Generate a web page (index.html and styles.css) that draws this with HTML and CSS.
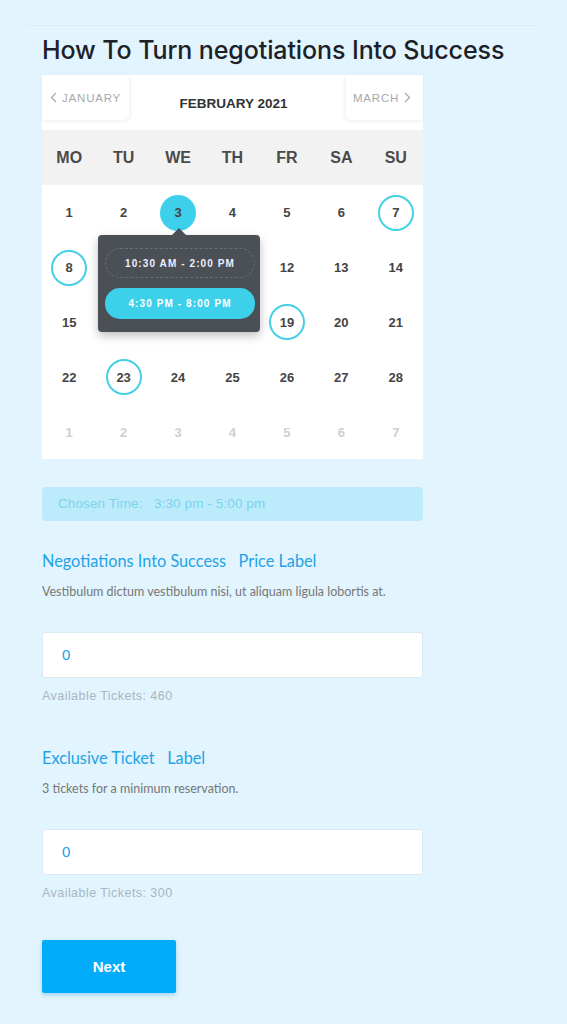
FILE: index.html
```html
<!DOCTYPE html>
<html>
<head>
<meta charset="utf-8">
<link rel="stylesheet" href="styles.css">
</head>
<body>
<div class="page">
  <div class="topline"></div>
  <h1 class="title">How To Turn negotiations Into Success</h1>
  <div class="form">
    <div class="calendar">
      <div class="cal-head">
        <div class="nav prev"><svg width="7" height="11" viewBox="0 0 7 11"><path d="M6 1 L1.5 5.5 L6 10" fill="none" stroke="#aaa" stroke-width="1.3"/></svg><span>JANUARY</span></div>
        <div class="month">FEBRUARY 2021</div>
        <div class="nav next"><span>MARCH</span><svg width="7" height="11" viewBox="0 0 7 11"><path d="M1 1 L5.5 5.5 L1 10" fill="none" stroke="#aaa" stroke-width="1.3"/></svg></div>
      </div>
      <div class="weekdays">
        <span>MO</span><span>TU</span><span>WE</span><span>TH</span><span>FR</span><span>SA</span><span>SU</span>
      </div>
      <div class="days">
        <div class="day"><span>1</span></div>
        <div class="day"><span>2</span></div>
        <div class="day"><span class="sel">3</span></div>
        <div class="day"><span>4</span></div>
        <div class="day"><span>5</span></div>
        <div class="day"><span>6</span></div>
        <div class="day"><span class="ring">7</span></div>
        <div class="day"><span class="ring">8</span></div>
        <div class="day covered"><span>9</span></div>
        <div class="day covered"><span>10</span></div>
        <div class="day covered"><span>11</span></div>
        <div class="day"><span>12</span></div>
        <div class="day"><span>13</span></div>
        <div class="day"><span>14</span></div>
        <div class="day"><span>15</span></div>
        <div class="day covered"><span>16</span></div>
        <div class="day covered"><span>17</span></div>
        <div class="day covered"><span>18</span></div>
        <div class="day"><span class="ring">19</span></div>
        <div class="day"><span>20</span></div>
        <div class="day"><span>21</span></div>
        <div class="day"><span>22</span></div>
        <div class="day"><span class="ring">23</span></div>
        <div class="day"><span>24</span></div>
        <div class="day"><span>25</span></div>
        <div class="day"><span>26</span></div>
        <div class="day"><span>27</span></div>
        <div class="day"><span>28</span></div>
        <div class="day muted"><span>1</span></div>
        <div class="day muted"><span>2</span></div>
        <div class="day muted"><span>3</span></div>
        <div class="day muted"><span>4</span></div>
        <div class="day muted"><span>5</span></div>
        <div class="day muted"><span>6</span></div>
        <div class="day muted"><span>7</span></div>
        <div class="tooltip">
          <div class="slot dashed">10:30 AM - 2:00 PM</div>
          <div class="slot active">4:30 PM - 8:00 PM</div>
        </div>
      </div>
    </div>

    <div class="chosen">Chosen Time:&nbsp;&nbsp; 3:30 pm - 5:00 pm</div>

    <div class="ticket first">
      <div class="t-label">Negotiations Into Success&nbsp;&nbsp; Price Label</div>
      <div class="t-desc">Vestibulum dictum vestibulum nisi, ut aliquam ligula lobortis at.</div>
      <div class="t-input">0</div>
      <div class="t-avail">Available Tickets: 460</div>
    </div>

    <div class="ticket second">
      <div class="t-label">Exclusive Ticket&nbsp;&nbsp; Label</div>
      <div class="t-desc">3 tickets for a minimum reservation.</div>
      <div class="t-input">0</div>
      <div class="t-avail">Available Tickets: 300</div>
    </div>

    <div class="btn">Next</div>
  </div>
</div>
</body>
</html>
```

FILE: styles.css
```css
* { box-sizing: border-box; }
html, body { margin: 0; padding: 0; }
body {
  background: #e2f4fd;
  font-family: "Lato", "Liberation Sans", sans-serif;
  width: 567px;
  height: 1024px;
  overflow: hidden;
}
.page { padding-top: 25px; }
.topline {
  height: 1px;
  margin: 0 27px 0 25px;
  background: #d8edf8;
}
.title {
  margin: 8px 0 0 42px;
  font-family: "Inter", "Lato", sans-serif;
  font-weight: 500;
  font-size: 25px;
  line-height: 32px;
  color: #1d2127;
  letter-spacing: -0.1px;
}
.form {
  margin: 9px 0 0 42px;
  width: 381px;
}
.calendar {
  background: #fff;
  font-family: "Liberation Sans", Arial, sans-serif;
}
.cal-head {
  height: 55px;
  display: flex;
  justify-content: space-between;
  align-items: flex-start;
}
.nav {
  height: 45px;
  display: flex;
  align-items: center;
  gap: 5px;
  font-size: 11.5px;
  color: #a9a9a9;
  letter-spacing: 0.8px;
  background: #fff;
}
.prev {
  width: 87px;
  padding-left: 8px;
  border-radius: 0 0 5px 0;
  box-shadow: 1px 1px 4px rgba(0,0,0,0.07);
}
.next {
  width: 77px;
  padding-left: 7px;
  border-radius: 0 0 0 5px;
  box-shadow: -1px 1px 4px rgba(0,0,0,0.07);
}
.month {
  padding-top: 21px;
  margin-right: 8px;
  font-size: 13.5px;
  font-weight: 700;
  color: #333;
}
.weekdays {
  height: 55px;
  background: #f2f2f2;
  display: grid;
  grid-template-columns: repeat(7, 1fr);
  align-items: center;
  text-align: center;
  font-size: 16px;
  font-weight: 700;
  color: #4a4a4a;
}
.days {
  position: relative;
  display: grid;
  grid-template-columns: repeat(7, 1fr);
  grid-auto-rows: 54.8px;
}
.day {
  display: flex;
  align-items: center;
  justify-content: center;
  padding-top: 1px;
  font-size: 13px;
  font-weight: 700;
  color: #444;
}
.day span {
  width: 36px;
  height: 36px;
  border-radius: 50%;
  display: flex;
  align-items: center;
  justify-content: center;
}
.day.covered span { visibility: hidden; }
.day .ring { border: 2px solid #45d0e6; }
.day .sel { background: #3dd0ea; }
.day.muted { color: #cfcfcf; }
.tooltip {
  position: absolute;
  left: 56px;
  top: 50px;
  width: 162px;
  padding: 13px 5px 13px 7px;
  background: #4b4f56;
  border-radius: 4px;
  box-shadow: 0 4px 10px rgba(0,0,0,0.25);
  display: flex;
  flex-direction: column;
  gap: 10px;
}
.tooltip::before {
  content: "";
  position: absolute;
  top: -7px;
  left: 74px;
  border-left: 7px solid transparent;
  border-right: 7px solid transparent;
  border-bottom: 7px solid #4b4f56;
}
.slot {
  width: 150px;
  height: 30px;
  border-radius: 15px;
  display: flex;
  align-items: center;
  justify-content: center;
  font-size: 10px;
  font-weight: 700;
  letter-spacing: 1.1px;
  color: #eef;
}
.slot.dashed { border: 1px dashed #6a6e75; }
.slot.active { background: #3dd0ea; height: 31px; color: #fff; }
.chosen {
  margin-top: 28px;
  height: 34px;
  background: #bcebfb;
  border-radius: 4px;
  padding-left: 16px;
  display: flex;
  align-items: center;
  font-family: "Liberation Sans", Arial, sans-serif;
  font-size: 13.5px;
  letter-spacing: 0.1px;
  color: #7dd3ee;
}
.ticket.first { margin-top: 30px; }
.ticket.second { margin-top: 45px; }
.t-label {
  font-size: 16.3px;
  line-height: 20px;
  color: #1fa3e6;
}
.t-desc {
  margin-top: 13px;
  font-size: 12.5px;
  line-height: 16px;
  color: #777;
}
.t-input {
  margin-top: 32px;
  height: 46px;
  background: #fff;
  border: 1px solid #dbe9f1;
  border-radius: 3px;
  padding-left: 19px;
  display: flex;
  align-items: center;
  font-family: "Liberation Sans", Arial, sans-serif;
  font-size: 15px;
  color: #1b9ee2;
}
.t-avail {
  margin-top: 11px;
  font-family: "Liberation Sans", Arial, sans-serif;
  font-size: 12.5px;
  line-height: 14px;
  color: #a7b7c3;
  letter-spacing: 0.45px;
}
.btn {
  margin-top: 40px;
  width: 134px;
  height: 53px;
  background: #02acfb;
  border-radius: 2px;
  box-shadow: 0 2px 4px rgba(0,140,220,0.3);
  display: flex;
  align-items: center;
  justify-content: center;
  font-family: "Liberation Sans", Arial, sans-serif;
  font-size: 15px;
  font-weight: 700;
  color: #fff;
}
```
